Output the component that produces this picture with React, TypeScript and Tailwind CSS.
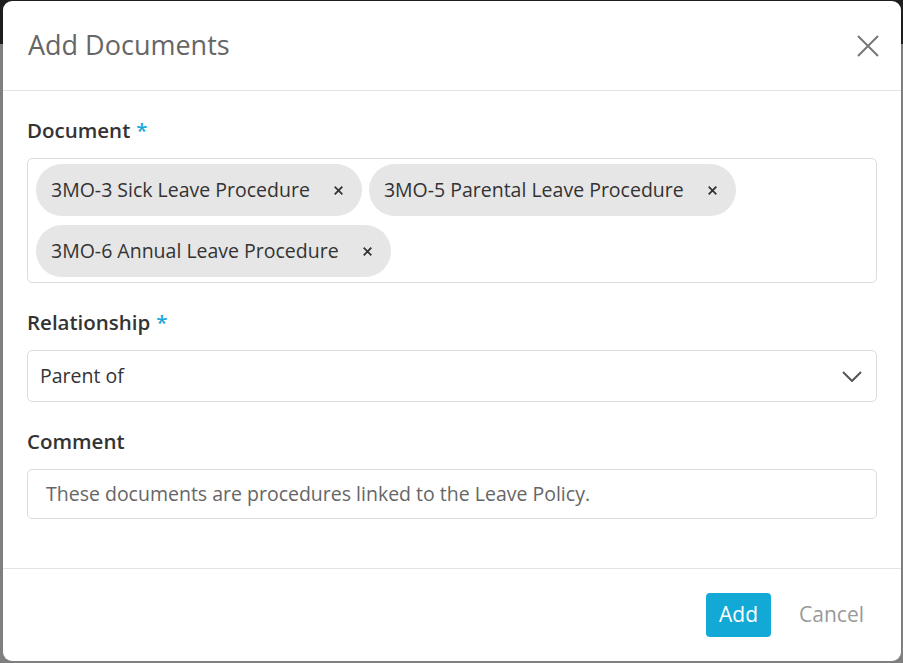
const docs = ['3MO-3 Sick Leave Procedure', '3MO-5 Parental Leave Procedure', '3MO-6 Annual Leave Procedure']

function Chip({ label }: { label: string }) {
  return (
    <span className="flex h-[52px] items-center rounded-full bg-[#e6e6e6] pl-[15px] pr-[19px] text-[19.5px] text-[#333]">
      {label}
      <svg viewBox="0 0 10 10" className="ml-[24px] h-[9px] w-[9px]" fill="none" stroke="#333" strokeWidth="2" strokeLinecap="square">
        <path d="M1.5 1.5 8.5 8.5M8.5 1.5 1.5 8.5" />
      </svg>
    </span>
  )
}

function Label({ text, required }: { text: string; required?: boolean }) {
  return (
    <div className="mb-[15px] text-[20.5px] font-semibold leading-[25px] text-[#333]">
      {text}
      {required && <span className="ml-[6px] text-[#1aa7d8]">*</span>}
    </div>
  )
}

export default function App() {
  return (
    <div className="relative h-[663px] w-[903px] overflow-hidden" style={{ fontFamily: '"Open Sans", sans-serif' }}>
      {/* page behind the dialog */}
      <div className="flex h-full flex-col">
        <div className="h-[44px] bg-[#1e1e1e]" />
        <div className="flex-1 bg-[#7f7f7f]" />
      </div>

      <div className="absolute left-[3px] top-[1px] flex h-[660px] w-[898px] flex-col rounded-[9px] bg-white">
        <div className="flex h-[90px] items-center justify-between border-b border-[#e3e3e3] pl-[25px] pr-[22px]">
          <h2 className="text-[27px] text-[#666]">Add Documents</h2>
          <svg viewBox="0 0 22 22" className="h-[22px] w-[22px]" fill="none" stroke="#777" strokeWidth="2">
            <path d="M1 1 21 21M21 1 1 21" />
          </svg>
        </div>

        <div className="flex-1 px-[24px] pt-[27px]">
          <Label text="Document" required />
          <div className="mb-[27px] flex flex-wrap gap-x-[7px] gap-y-[9px] rounded-[5px] border border-[#dcdcdc] px-[8px] pb-[5px] pt-[5px]">
            {docs.map((d) => (
              <Chip key={d} label={d} />
            ))}
          </div>

          <Label text="Relationship" required />
          <div className="mb-[27px] flex h-[52px] items-center justify-between rounded-[5px] border border-[#dcdcdc] pl-[12px] pr-[14px] text-[19.5px] text-[#333]">
            Parent of
            <svg viewBox="0 0 20 11" className="h-[11px] w-[20px]" fill="none" stroke="#555" strokeWidth="2">
              <path d="M1 1 10 10 19 1" />
            </svg>
          </div>

          <Label text="Comment" />
          <div className="flex h-[50px] items-center rounded-[5px] border border-[#dcdcdc] pl-[18px] text-[19.5px] text-[#666]">
            These documents are procedures linked to the Leave Policy.
          </div>
        </div>

        <div className="flex h-[93px] items-center justify-end gap-[28px] border-t border-[#e3e3e3] pr-[37px]">
          <button className="h-[44px] w-[65px] rounded-[4px] bg-[#12a9d6] text-[21px] text-white">Add</button>
          <button className="text-[21px] text-[#999]">Cancel</button>
        </div>
      </div>
    </div>
  )
}
